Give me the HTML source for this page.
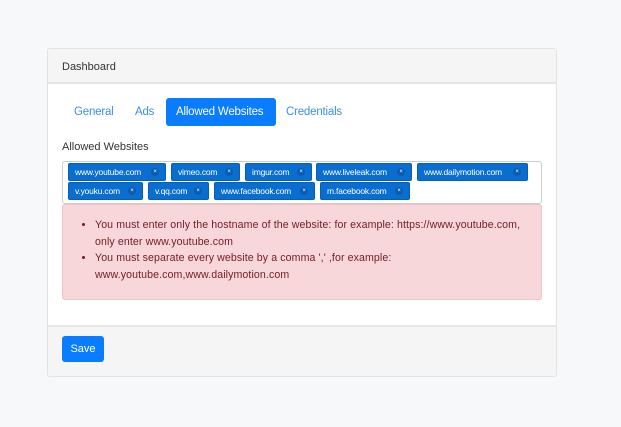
<!DOCTYPE html>
<html><head><style>
*{box-sizing:border-box;margin:0;padding:0}
body{width:621px;height:427px;background:#f7f8fa;font-family:"Liberation Sans",sans-serif;position:relative;overflow:hidden;color:#212529}
.card{position:absolute;left:47px;top:48px;width:510px;height:329px;background:#fff;border:1px solid #e3e3e3;border-radius:3px}
.hd{position:absolute;left:0;top:0;right:0;height:35px;background:#f5f5f5;border-bottom:2px solid #e6e6e6;font-size:11px;color:#333;padding:12px 0 0 14px}
.tab{position:absolute;top:49px;height:28px;font-size:11.5px;color:#3a8ef0;line-height:28px;letter-spacing:-0.2px}
.tab.act{background:#0a7cff;color:#fff;border-radius:3px;padding:0 10px}
.lbl{position:absolute;left:14px;top:92px;font-size:11px;color:#333}
.inp{position:absolute;left:14px;top:112px;width:480px;height:43px;border:1px solid #ccc;border-radius:3px;background:#fff}
.tag{position:absolute;height:18px;background:#0a6ed1;border:1px solid #075fb5;border-radius:2px;color:#fff;font-size:8.5px;line-height:16px;padding-left:6px;letter-spacing:-0.2px}
.tag i{position:absolute;right:6px;top:4px;width:8px;height:8px;border-radius:50%;background:#0a5cb0;font-style:normal;font-size:6px;line-height:8px;text-align:center}
.al{position:absolute;left:14px;top:155px;width:480px;height:96px;background:#f8d7da;border:1px solid #f3c2c7;border-radius:3px;color:#721c24;font-size:10.6px;line-height:16.6px;padding:12px 14px 0 32px;letter-spacing:0.1px}
.ft{position:absolute;left:0;top:276px;right:0;bottom:0;background:#f5f5f5;border-top:2px solid #e6e6e6}
.btn{position:absolute;left:14px;top:9px;width:42px;height:26px;background:#0a7cff;color:#fff;border-radius:3px;font-size:11px;text-align:center;line-height:26px}
</style></head><body>
<div class="card">
<div class="hd">Dashboard</div>
<div class="tab" style="left:26px">General</div>
<div class="tab" style="left:87px">Ads</div>
<div class="tab act" style="left:118px;width:110px">Allowed Websites</div>
<div class="tab" style="left:238px">Credentials</div>
<div class="lbl">Allowed Websites</div>
<div class="al"><ul><li>You must enter only the hostname of the website: for example: https://www.youtube.com, only enter www.youtube.com</li><li>You must separate every website by a comma ',' ,for example: www.youtube.com,www.dailymotion.com</li></ul></div>
<div class="inp"></div>
<div class="tag" style="left:20px;top:114px;width:98px">www.youtube.com<i>×</i></div>
<div class="tag" style="left:123px;top:114px;width:69px">vimeo.com<i>×</i></div>
<div class="tag" style="left:197px;top:114px;width:67px">imgur.com<i>×</i></div>
<div class="tag" style="left:268px;top:114px;width:96px">www.liveleak.com<i>×</i></div>
<div class="tag" style="left:369px;top:114px;width:111px">www.dailymotion.com<i>×</i></div>
<div class="tag" style="left:20px;top:133px;width:75px">v.youku.com<i>×</i></div>
<div class="tag" style="left:100px;top:133px;width:61px">v.qq.com<i>×</i></div>
<div class="tag" style="left:166px;top:133px;width:101px">www.facebook.com<i>×</i></div>
<div class="tag" style="left:272px;top:133px;width:90px">m.facebook.com<i>×</i></div>
<div class="ft"><div class="btn">Save</div></div>
</div>
</body></html>
